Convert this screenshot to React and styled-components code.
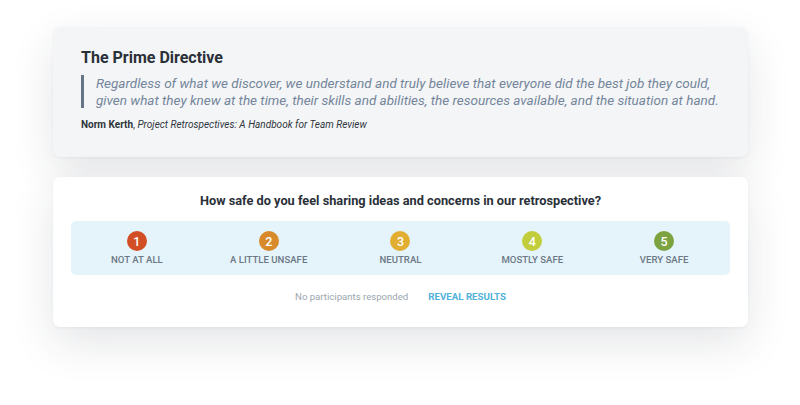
import React from 'react';
import styled, { createGlobalStyle } from 'styled-components';

const GlobalStyle = createGlobalStyle`
  body {
    margin: 0;
    background: #ffffff;
    font-family: Roboto, "Noto Sans", sans-serif;
  }
`;

const SCALE = [
  { value: 1, label: 'Not at all', color: '#d24f26' },
  { value: 2, label: 'A little unsafe', color: '#d88a2b' },
  { value: 3, label: 'Neutral', color: '#e1ae31' },
  { value: 4, label: 'Mostly safe', color: '#c2cd3b' },
  { value: 5, label: 'Very safe', color: '#7ca33f' },
];

function App() {
  return (
    <Page>
      <GlobalStyle />
      <Directive>
        <Title>The Prime Directive</Title>
        <Quote>
          Regardless of what we discover, we understand and truly believe that everyone did the best job they could,
          given what they knew at the time, their skills and abilities, the resources available, and the situation at hand.
        </Quote>
        <Source>
          <strong>Norm Kerth</strong>, <em>Project Retrospectives: A Handbook for Team Review</em>
        </Source>
      </Directive>

      <Poll>
        <Question>How safe do you feel sharing ideas and concerns in our retrospective?</Question>
        <Scale>
          {SCALE.map((s) => (
            <Option key={s.value}>
              <Dot color={s.color}>{s.value}</Dot>
              <Label>{s.label}</Label>
            </Option>
          ))}
        </Scale>
        <Footer>
          <Muted>No participants responded</Muted>
          <Reveal>Reveal results</Reveal>
        </Footer>
      </Poll>
    </Page>
  );
}

const Page = styled.div`
  box-sizing: border-box;
  width: 800px;
  min-height: 405px;
  padding: 27px 52px 0 53px;
  display: flex;
  flex-direction: column;
  gap: 20px;
`;

const Card = styled.div`
  border-radius: 7px;
  box-shadow: 0 16px 44px rgba(30, 40, 55, 0.12), 0 1px 3px rgba(30, 40, 55, 0.05);
`;

const Directive = styled(Card)`
  background: #f4f5f7;
  padding: 21px 28px 26px;
`;

const Title = styled.h2`
  margin: 0;
  font-size: 16px;
  line-height: 20px;
  font-weight: 700;
  color: #2a3038;
`;

const Quote = styled.blockquote`
  margin: 7px 0 0;
  padding: 0 0 0 12px;
  border-left: 3px solid #667586;
  font-size: 13.5px;
  line-height: 16.5px;
  font-style: italic;
  color: #73859a;
`;

const Source = styled.div`
  margin-top: 10px;
  font-size: 10px;
  line-height: 13px;
  color: #2f353c;
  strong {
    font-weight: 700;
  }
`;

const Poll = styled(Card)`
  background: #ffffff;
  padding: 16px 18px 23px;
  display: flex;
  flex-direction: column;
`;

const Question = styled.div`
  text-align: center;
  font-size: 12.75px;
  line-height: 16px;
  font-weight: 700;
  color: #2a3038;
`;

const Scale = styled.div`
  margin-top: 12px;
  background: #e5f4fa;
  border-radius: 5px;
  padding: 10px 0 9px;
  display: grid;
  grid-template-columns: repeat(5, 1fr);
`;

const Option = styled.div`
  display: flex;
  flex-direction: column;
  align-items: center;
  gap: 3px;
`;

const Dot = styled.div`
  width: 20px;
  height: 20px;
  border-radius: 50%;
  background: ${(p) => p.color};
  color: #ffffff;
  font-size: 12.5px;
  font-weight: 500;
  display: flex;
  align-items: center;
  justify-content: center;
`;

const Label = styled.div`
  font-size: 9.6px;
  line-height: 12px;
  font-weight: 500;
  text-transform: uppercase;
  color: #6c7886;
`;

const Footer = styled.div`
  margin-top: 15px;
  display: flex;
  justify-content: center;
  align-items: center;
  gap: 20px;
  line-height: 14px;
`;

const Muted = styled.span`
  font-size: 9.6px;
  color: #9ba6b0;
`;

const Reveal = styled.span`
  font-size: 9.7px;
  color: #52b2da;
  font-weight: 700;
  text-transform: uppercase;
`;

export default App;
